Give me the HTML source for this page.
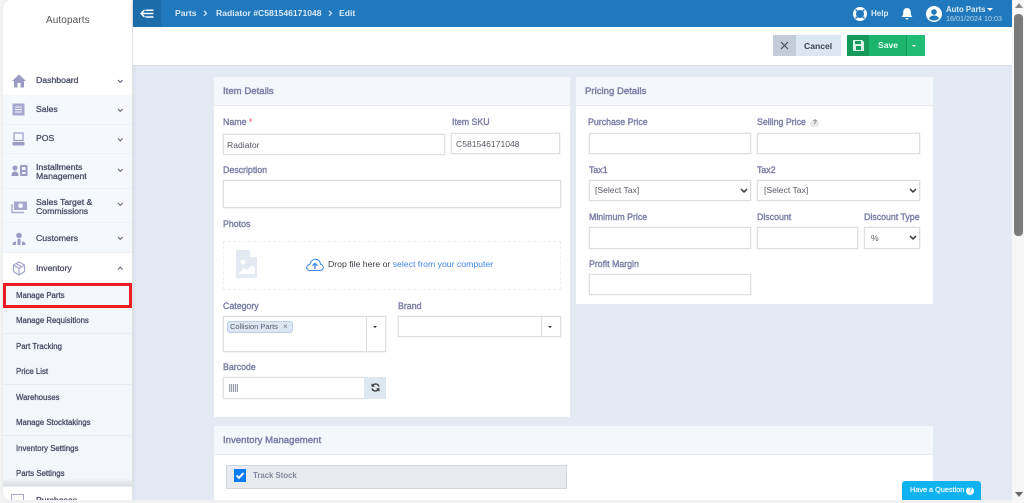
<!DOCTYPE html>
<html><head><meta charset="utf-8"><style>
*{box-sizing:border-box}
html,body{margin:0;padding:0;width:1024px;height:503px;overflow:hidden;background:#f4f4f4;font-family:"Liberation Sans",sans-serif}
body{filter:blur(.3px)}
div,span,svg{position:absolute}
span.i{position:static}
.t{white-space:nowrap;line-height:12px}
.row{left:3px;width:129px;border-bottom:1px solid #eef1f6;background:#f5f8fc}
.m{left:36px;font-size:8.7px;color:#4b4f68;-webkit-text-stroke:.3px #4b4f68;white-space:nowrap;line-height:9px}
.s{left:16px;font-size:7.8px;color:#4b4f68;-webkit-text-stroke:.3px #4b4f68;white-space:nowrap;line-height:10px}
.sr{left:3px;width:129px;height:25.5px;background:#f3f6fb;border-bottom:1px solid #e8ecf2}
.l{font-size:8.8px;color:#7d80a8;-webkit-text-stroke:.4px #7d80a8;white-space:nowrap;line-height:10px}
.h{font-size:9.6px;color:#7d80a8;-webkit-text-stroke:.45px #7d80a8;white-space:nowrap;line-height:12px}
.f{background:#fff;border:1px solid #dcdfe4;box-shadow:0 0 0 .5px #eceef1}
.v{font-size:8.6px;color:#555a63;white-space:nowrap;line-height:10px}
.pn{background:#fff}
.ph{background:#f4f7fb;border-bottom:1px solid #e6eaf0;height:29px}
</style></head><body>
<!-- page bg -->
<div style="left:133px;top:0;width:879px;height:500px;background:#e4eaf3"></div>
<!-- sidebar -->
<div style="left:3px;top:0;width:129px;height:500px;background:#fff;border-radius:8px 0 0 8px;box-shadow:1px 0 3px rgba(0,0,0,.12)"></div>
<div class="t" style="left:46px;top:15px;font-size:10px;color:#555;letter-spacing:.1px">Autoparts</div>
<div class="row" style="top:95px;height:30px"></div>
<div class="row" style="top:125px;height:29px"></div>
<div class="row" style="top:154px;height:35px"></div>
<div class="row" style="top:189px;height:34px"></div>
<div class="row" style="top:223px;height:30px"></div>
<div class="sr" style="top:283px"></div><div class="sr" style="top:308px"></div><div class="sr" style="top:334px"></div><div class="sr" style="top:359px"></div><div class="sr" style="top:385px"></div><div class="sr" style="top:410px"></div><div class="sr" style="top:436px"></div><div class="sr" style="top:461px;height:26px;background:linear-gradient(#f3f6fb 70%,#d9dce1)"></div>
<div class="m" style="top:76px">Dashboard</div>
<div class="m" style="top:105px">Sales</div>
<div class="m" style="top:134px">POS</div>
<div class="m" style="top:163px">Installments</div><div class="m" style="top:172px">Management</div>
<div class="m" style="top:198px">Sales Target &amp;</div><div class="m" style="top:207px">Commissions</div>
<div class="m" style="top:234px">Customers</div>
<div class="m" style="top:264px">Inventory</div>
<div class="m" style="top:496px">Purchases</div>
<div class="s" style="top:291px">Manage Parts</div>
<div class="s" style="top:316px">Manage Requisitions</div>
<div class="s" style="top:342px">Part Tracking</div>
<div class="s" style="top:367px">Price List</div>
<div class="s" style="top:393px">Warehouses</div>
<div class="s" style="top:418px">Manage Stocktakings</div>
<div class="s" style="top:444px">Inventory Settings</div>
<div class="s" style="top:469px">Parts Settings</div>
<div style="left:3px;top:283px;width:129px;height:25px;border:3px solid #ed1c24"></div>
<!-- chevrons -->
<svg style="left:116px;top:76px" width="9" height="196" fill="none" stroke="#55586f" stroke-width="1"><path d="M2 4l2.300 2.300L6.600 4M2 33l2.300 2.300L6.600 33M2 62.500l2.300 2.300 2.300-2.300M2 93l2.300 2.300L6.600 93M2 127l2.300 2.300L6.600 127M2 161l2.300 2.300L6.600 161M2 193.500l2.300-2.300 2.300 2.300"/></svg>
<!-- menu icons -->
<svg style="left:11px;top:74px" width="16" height="14" fill="#9a9cc6"><path d="M8 .5L15 7h-2v6.500H9.500V9h-3v4.500H3V7H1z"/></svg>
<svg style="left:12px;top:103px" width="14" height="14"><rect x=".5" y=".5" width="12" height="12" fill="#a6a8cf"/><path d="M3 4h7M3 6.500h7M3 9h7" stroke="#f5f8fc" stroke-width="1"/></svg>
<svg style="left:12px;top:132px" width="14" height="14" fill="none"><rect x="2" y="1" width="9" height="7.500" stroke="#9a9cc6" stroke-width="1.200"/><rect x=".5" y="10" width="12" height="3.500" rx="1" fill="#9a9cc6"/></svg>
<svg style="left:11px;top:164px" width="17" height="13" fill="#9a9cc6"><circle cx="4" cy="4" r="2.500"/><path d="M.5 12c0-3.500 1.500-4.500 3.500-4.500S7.500 8.500 7.500 12z"/><rect x="9" y="1" width="7.500" height="11" rx="1"/><rect x="11" y="3" width="3.500" height="3" fill="#f5f8fc"/><rect x="11" y="8" width="3.500" height="2" fill="#f5f8fc"/></svg>
<svg style="left:11px;top:200px" width="17" height="14" fill="none" stroke="#a6a8cf"><rect x="3" y="1.500" width="13" height="8.500" fill="#a6a8cf" stroke="none"/><circle cx="9.500" cy="5.700" r="2.300" fill="#f5f8fc" stroke="none"/><path d="M1 4v8.500h12" stroke-width="1.400"/></svg>
<svg style="left:12px;top:232px" width="14" height="14" fill="#9a9cc6"><circle cx="7" cy="3.500" r="2.800"/><path d="M5.500 7h3v6h-3zM.5 13c0-2.500 1-3.500 3.500-3.500v3.500zM13.500 13c0-2.500-1-3.500-3.500-3.500v3.500z"/></svg>
<svg style="left:12px;top:261px" width="14" height="15" fill="none" stroke="#a6a8cf" stroke-width="1.200"><path d="M7 1l5.500 3v6.500L7 14l-5.500-3.500V4zM1.500 4L7 7.500 12.500 4M7 7.500V14M4 2.500l5.500 3.200"/></svg>
<svg style="left:11px;top:494px" width="14" height="7" fill="none" stroke="#a6a8cf"><rect x=".5" y=".5" width="12" height="9"/></svg>
<!-- header -->
<div style="left:133px;top:0;width:879px;height:27px;background:#2079bd;box-shadow:0 2px 5px rgba(0,0,0,.12)"></div>
<div style="left:133px;top:0;width:28px;height:27px;background:#1b6ca9"></div>
<svg style="left:140px;top:9px" width="14" height="10" fill="none" stroke="#fff" stroke-width="1.500"><path d="M4.500 1L1 4.500 4.500 8M1.500 4.500h12M5.500 1.200h8M5.500 8h8"/></svg>
<div class="t" style="left:175px;top:7px;font-size:8.6px;font-weight:bold;color:#dce9f5">Parts</div>
<svg style="left:203px;top:10px" width="5" height="7" fill="none" stroke="#dce9f5" stroke-width="1.200"><path d="M1 .8l2.500 2.500L1 5.800"/></svg>
<div class="t" style="left:216px;top:7px;font-size:8.6px;font-weight:bold;color:#dce9f5">Radiator #C581546171048</div>
<svg style="left:328px;top:10px" width="5" height="7" fill="none" stroke="#dce9f5" stroke-width="1.200"><path d="M1 .8l2.500 2.500L1 5.800"/></svg>
<div class="t" style="left:339px;top:7px;font-size:8.6px;font-weight:bold;color:#dce9f5">Edit</div>
<svg style="left:852px;top:6px" width="16" height="16" fill="none"><circle cx="8" cy="8" r="5.500" stroke="#fff" stroke-width="3"/><path d="M3.500 3.500l2 2M12.500 3.500l-2 2M3.500 12.500l2-2M12.500 12.500l-2-2" stroke="#2079bd" stroke-width="1.300"/></svg>
<div class="t" style="left:871px;top:8px;font-size:8px;font-weight:bold;color:#dce9f5">Help</div>
<svg style="left:901px;top:7px" width="12" height="14" fill="#fff"><path d="M6 1c2.800 0 3.800 2.200 3.800 4.500 0 2.500.7 3.500 1.700 4.500H.5c1-1 1.700-2 1.700-4.500C2.200 3.200 3.200 1 6 1zM4.500 11h3a1.500 1.500 0 0 1-3 0z"/></svg>
<svg style="left:926px;top:6px" width="16" height="16"><circle cx="8" cy="8" r="8" fill="#fff"/><circle cx="8" cy="6" r="2.800" fill="#2079bd"/><path d="M3 12.500c.8-2 2.800-3 5-3s4.200 1 5 3c-1.300 1.300-3 2-5 2s-3.700-.7-5-2z" fill="#2079bd"/></svg>
<div class="t" style="left:946px;top:4px;font-size:7.800px;font-weight:bold;color:#dce9f5">Auto Parts</div>
<div style="left:987px;top:8px;width:0;height:0;border:3px solid transparent;border-top-color:#fff"></div>
<div class="t" style="left:946px;top:13px;font-size:7.200px;color:#b9d4ea">16/01/2024 10:03</div>
<!-- action bar -->
<div style="left:133px;top:27px;width:879px;height:39px;background:#fff;border-bottom:1px solid #d8dde4"></div>
<div style="left:773px;top:35px;width:23px;height:21px;background:#c3ccd8"></div>
<div style="left:796px;top:35px;width:45px;height:21px;background:#dce6f3"></div>
<svg style="left:780px;top:41px" width="9" height="9" stroke="#454a55" stroke-width="1.100"><path d="M1 1l7 7M8 1L1 8"/></svg>
<div class="t" style="left:804px;top:40px;font-size:8.6px;font-weight:bold;color:#3c4150">Cancel</div>
<div style="left:847px;top:35px;width:22px;height:21px;background:#169a5b"></div>
<div style="left:869px;top:35px;width:37px;height:21px;background:#1cb36d"></div>
<div style="left:906px;top:35px;width:19px;height:21px;background:#20bb75;border-left:1px solid #169a5b"></div>
<svg style="left:853px;top:40px" width="11" height="11"><path d="M0 0h9l2 2v9H0z" fill="#d9f3e6"/><rect x="2" y="1" width="6" height="3" fill="#169a5b"/><rect x="3" y="6" width="5" height="4" fill="#169a5b"/></svg>
<div class="t" style="left:878px;top:39px;font-size:8.6px;font-weight:bold;color:#eafff5">Save</div>
<div style="left:912px;top:45px;width:0;height:0;border:2.500px solid transparent;border-top-color:#fff"></div>
<!-- Item details -->
<div class="pn" style="left:214px;top:77px;width:356px;height:340px"></div>
<div class="ph" style="left:214px;top:77px;width:356px"></div>
<div class="h" style="left:223px;top:86px">Item Details</div>
<div class="l" style="left:223px;top:117px">Name <span class="i" style="color:#ee3b4b;-webkit-text-stroke:0">*</span></div>
<div class="f" style="left:223px;top:134px;width:222px;height:21px"></div>
<div class="v" style="left:227px;top:140px">Radiator</div>
<div class="l" style="left:452px;top:117px">Item SKU</div>
<div class="f" style="left:451px;top:133px;width:109px;height:21px"></div>
<div class="v" style="left:456px;top:139px">C581546171048</div>
<div class="l" style="left:223px;top:165px">Description</div>
<div class="f" style="left:223px;top:180px;width:338px;height:28px"></div>
<div class="l" style="left:223px;top:219px">Photos</div>
<div style="left:223px;top:241px;width:338px;height:49px;border:1px dashed #eceff3"></div>
<svg style="left:236px;top:250px" width="21" height="28"><path d="M0 0h13l8 8v20H0z" fill="#e4eaf3"/><path d="M14 0l7 7h-7z" fill="#fff"/><circle cx="7" cy="12" r="2.500" fill="#fff"/><path d="M2 24l6-6 3 2 5-5 3 3v6z" fill="#fff"/></svg>
<svg style="left:306px;top:258px" width="18" height="14" fill="none" stroke="#3f86e8"><path d="M4 12.500C1.500 12.500.7 10.800.7 9.500.7 7.500 2.500 6.500 3.700 6.500 4.500 3 7 1.300 9.500 1.300c3 0 5 2.500 5 5 1.500.2 2.800 1.500 2.800 3.200 0 1.800-1.500 3-3 3z" stroke-width="1"/><path d="M9 11V5.500M6.500 7.800L9 5.300l2.500 2.500" stroke-width="1.300"/></svg>
<div class="t" style="left:328px;top:258px;font-size:8.700px;color:#3a3e46">Drop file here or <span class="i" style="color:#3f86e8">select from your computer</span></div>
<div class="l" style="left:223px;top:301px">Category</div>
<div class="f" style="left:223px;top:316px;width:163px;height:36px"></div>
<div style="left:366px;top:316px;width:1px;height:36px;background:#dcdfe4"></div>
<div style="left:373px;top:326px;width:0;height:0;border:2.500px solid transparent;border-top-color:#333"></div>
<div style="left:227px;top:321px;width:66px;height:12px;background:#dde7f3;border:1px solid #b9d0e6;border-radius:3px"></div>
<div class="t" style="left:230px;top:321px;font-size:7.500px;color:#555a63">Collision Parts</div>
<div class="t" style="left:283px;top:321px;font-size:8px;color:#777">×</div>
<div class="l" style="left:398px;top:301px">Brand</div>
<div class="f" style="left:398px;top:316px;width:163px;height:21px"></div>
<div style="left:541px;top:316px;width:1px;height:21px;background:#dcdfe4"></div>
<div style="left:548px;top:326px;width:0;height:0;border:2.500px solid transparent;border-top-color:#333"></div>
<div class="l" style="left:223px;top:362px">Barcode</div>
<div class="f" style="left:223px;top:377px;width:142px;height:22px"></div>
<div style="left:229px;top:384px;width:9px;height:8px;background:repeating-linear-gradient(90deg,#9a9ea9 0 1px,#e8e9ec 1px 2px)"></div>
<div style="left:364px;top:377px;width:22px;height:22px;background:#dde7f2"></div>
<svg style="left:371px;top:383px" width="9" height="9" fill="none" stroke="#333" stroke-width="1.300"><path d="M8 3.500A3.500 3.500 0 0 0 1.500 3M1 5.500A3.500 3.500 0 0 0 7.500 6"/><path d="M1 .8V3.300h2.500M8 8.200V5.700H5.500" stroke-width="1"/></svg>
<!-- Pricing -->
<div class="pn" style="left:576px;top:77px;width:357px;height:227px"></div>
<div class="ph" style="left:576px;top:77px;width:357px"></div>
<div class="h" style="left:585px;top:86px">Pricing Details</div>
<div class="l" style="left:588px;top:117px">Purchase Price</div>
<div class="f" style="left:589px;top:133px;width:162px;height:21px"></div>
<div class="l" style="left:757px;top:117px">Selling Price</div>
<div style="left:810px;top:120px;width:9px;height:7px;background:#e8e9ec;border-radius:3px"></div>
<div class="t" style="left:813px;top:118px;font-size:6.500px;font-weight:bold;color:#666;line-height:10px">?</div>
<div class="f" style="left:757px;top:133px;width:163px;height:21px"></div>
<div class="l" style="left:589px;top:165px">Tax1</div>
<div class="f" style="left:589px;top:180px;width:162px;height:21px"></div>
<div class="v" style="left:595px;top:185px">[Select Tax]</div>
<div class="l" style="left:757px;top:165px">Tax2</div>
<div class="f" style="left:757px;top:180px;width:163px;height:21px"></div>
<div class="v" style="left:764px;top:185px">[Select Tax]</div>
<svg style="left:740px;top:188px" width="8" height="6" fill="none" stroke="#333" stroke-width="1.500"><path d="M1 1l3 3 3-3"/></svg>
<svg style="left:909px;top:188px" width="8" height="6" fill="none" stroke="#333" stroke-width="1.500"><path d="M1 1l3 3 3-3"/></svg>
<div class="l" style="left:589px;top:212px">Minimum Price</div>
<div class="f" style="left:589px;top:227px;width:162px;height:22px"></div>
<div class="l" style="left:757px;top:212px">Discount</div>
<div class="f" style="left:757px;top:227px;width:101px;height:22px"></div>
<div class="l" style="left:864px;top:212px">Discount Type</div>
<div class="f" style="left:864px;top:227px;width:56px;height:22px"></div>
<div class="v" style="left:871px;top:233px">%</div>
<svg style="left:909px;top:235px" width="8" height="6" fill="none" stroke="#333" stroke-width="1.500"><path d="M1 1l3 3 3-3"/></svg>
<div class="l" style="left:589px;top:259px">Profit Margin</div>
<div class="f" style="left:589px;top:274px;width:162px;height:21px"></div>
<!-- Inventory -->
<div class="pn" style="left:214px;top:426px;width:719px;height:74px"></div>
<div class="ph" style="left:214px;top:426px;width:719px"></div>
<div class="h" style="left:223px;top:435px">Inventory Management</div>
<div style="left:226px;top:465px;width:341px;height:24px;background:#e7eaee;border:1px solid #d2d7dd"></div>
<div style="left:234px;top:469px;width:12px;height:13px;background:#0d7cf2"></div>
<svg style="left:235px;top:471px" width="10" height="9" fill="none" stroke="#fff" stroke-width="2"><path d="M1.500 4.500l2.500 2.300 4.500-4.800"/></svg>
<div class="t" style="left:253px;top:470px;font-size:7.800px;font-weight:bold;color:#84879f">Track Stock</div>
<!-- question -->
<div style="left:902px;top:481px;width:79px;height:19px;background:#10b3ef;border-radius:3px 3px 0 0"></div>
<div class="t" style="left:910px;top:484px;font-size:7.300px;color:#eaf8ff;-webkit-text-stroke:.25px #eaf8ff">Have a Question</div>
<div style="left:966px;top:487px;width:8px;height:8px;border-radius:50%;background:#fff"></div>
<div class="t" style="left:968px;top:485px;font-size:7px;font-weight:bold;color:#10b3ef">?</div>
<!-- scrollbar -->
<div style="left:1012px;top:0;width:12px;height:503px;background:#f7f7f7"></div>
<div style="left:1014px;top:14px;width:9px;height:222px;background:#7b7b7b;border-radius:4px"></div>
<div style="left:1015px;top:3px;width:0;height:0;border:4px solid transparent;border-top:0;border-bottom:5px solid #888"></div>
<div style="left:1015px;top:492px;width:0;height:0;border:4px solid transparent;border-bottom:0;border-top:5px solid #666"></div>
<div style="left:0;top:500px;width:1012px;height:3px;background:#f1f1f1"></div>
</body></html>
